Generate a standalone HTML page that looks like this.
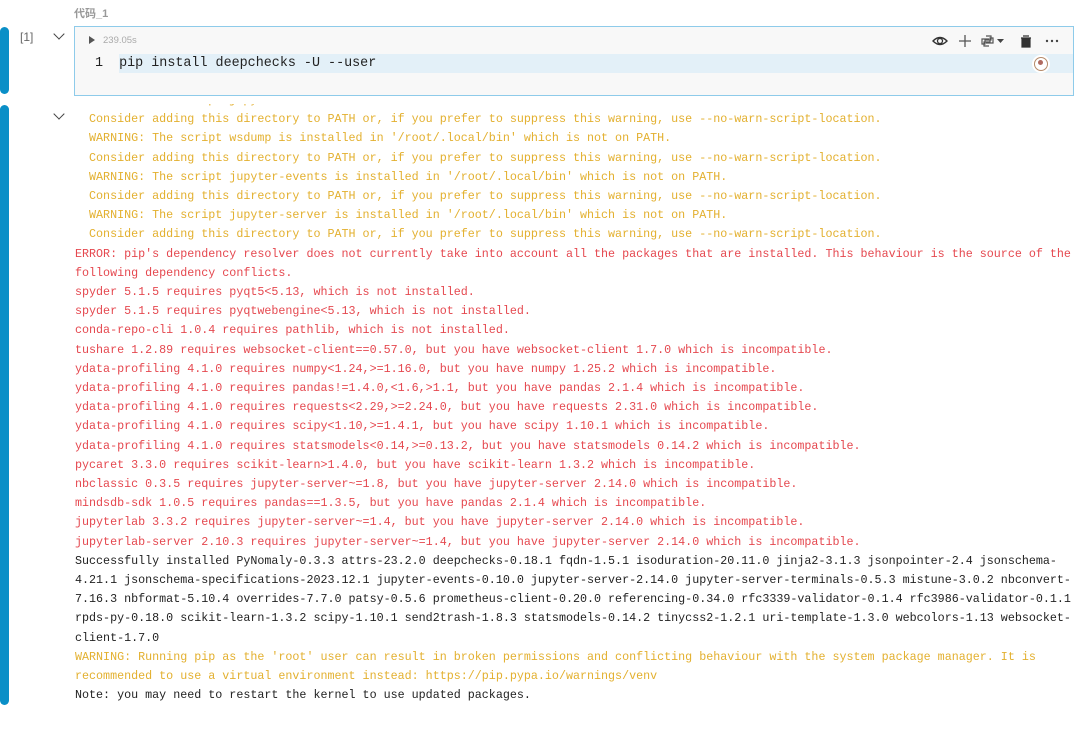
<!DOCTYPE html>
<html><head><meta charset="utf-8"><style>
body{margin:0;width:1080px;height:734px;background:#fff;position:relative;overflow:hidden;font-family:"Liberation Sans","Noto Sans CJK SC",sans-serif}
.abs{position:absolute}
.bar{position:absolute;left:0;width:9px;background:#0a8fc7;border-radius:5px}
pre{margin:0;font-family:"Liberation Mono",monospace;font-size:11.7px;line-height:19.2px;white-space:pre}
.y{color:#e3b02f}.r{color:#e5484f}.k{color:#222}
.chev{position:absolute;width:7px;height:7px;border-right:1.6px solid #444;border-bottom:1.6px solid #444;transform:rotate(45deg)}
</style></head><body>
<div class="abs" style="left:74px;top:5px;font-size:11px;color:#999;font-weight:bold">代码_1</div>
<div class="bar" style="top:27px;height:67px"></div>
<div class="bar" style="top:105px;height:600px"></div>
<div class="abs" style="left:20px;top:30px;font-size:12px;color:#666">[1]</div>
<div class="chev" style="left:55px;top:30px"></div>
<div class="chev" style="left:55px;top:110px"></div>
<div class="abs" style="left:74px;top:26px;width:998px;height:68px;border:1px solid #8ecbea;background:#f8f8f8">
 <div class="abs" style="left:14px;top:9px;width:0;height:0;border-left:6px solid #555;border-top:4.5px solid transparent;border-bottom:4.5px solid transparent"></div>
 <div class="abs" style="left:28px;top:8px;font-size:9.5px;color:#aaa">239.05s</div>
 <div class="abs" style="left:44px;top:27px;width:954px;height:19px;background:#e3f0f8"></div>
 <pre class="abs k" style="left:20px;top:28px;font-size:13.4px;line-height:18px">1  pip install deepchecks -U --user</pre>
 <div class="abs" style="left:957px;top:28px;width:18px;height:18px;border-radius:50%;background:#fff;"></div>
 <div class="abs" style="left:959px;top:30px;width:12px;height:12px;border-radius:50%;border:1.5px solid #b58a6a"></div>
 <div class="abs" style="left:963px;top:33px;width:5px;height:5px;border-radius:50%;background:#b06a60"></div>
 <svg class="abs" style="left:856px;top:6px" width="130" height="16" viewBox="0 0 130 16">
  <path d="M2 8 Q9 1 16 8 Q9 15 2 8Z" fill="none" stroke="#333" stroke-width="1.4"/><circle cx="9" cy="8" r="2.5" fill="none" stroke="#333" stroke-width="1.3"/>
  <path d="M34 2V14M28 8H40" stroke="#555" stroke-width="1.3"/>
  <path d="M55 3h5v4h-6v4h-3v-5h7M58 13h-5v-4h6v-4h3v5h-7" fill="none" stroke="#555" stroke-width="1.2"/>
  <path d="M66 6h7l-3.5 4z" fill="#444"/>
  <path d="M92 3h6M90 5h10M91 5v9h8v-9" fill="#333" stroke="#333" stroke-width="1.2"/>
  <circle cx="116" cy="8" r="1.2" fill="#444"/><circle cx="121" cy="8" r="1.2" fill="#444"/><circle cx="126" cy="8" r="1.2" fill="#444"/>
 </svg>
</div>
<div class="abs" style="left:75px;top:104px;width:1005px;height:600px;overflow:hidden">
<pre style="margin-top:-13px"><span class="y">  WARNING: The script jupyter-trust is installed in '/root/.local/bin' which is not on PATH.
  Consider adding this directory to PATH or, if you prefer to suppress this warning, use --no-warn-script-location.
  WARNING: The script wsdump is installed in '/root/.local/bin' which is not on PATH.
  Consider adding this directory to PATH or, if you prefer to suppress this warning, use --no-warn-script-location.
  WARNING: The script jupyter-events is installed in '/root/.local/bin' which is not on PATH.
  Consider adding this directory to PATH or, if you prefer to suppress this warning, use --no-warn-script-location.
  WARNING: The script jupyter-server is installed in '/root/.local/bin' which is not on PATH.
  Consider adding this directory to PATH or, if you prefer to suppress this warning, use --no-warn-script-location.</span>
<span class="r">ERROR: pip's dependency resolver does not currently take into account all the packages that are installed. This behaviour is the source of the
following dependency conflicts.
spyder 5.1.5 requires pyqt5&lt;5.13, which is not installed.
spyder 5.1.5 requires pyqtwebengine&lt;5.13, which is not installed.
conda-repo-cli 1.0.4 requires pathlib, which is not installed.
tushare 1.2.89 requires websocket-client==0.57.0, but you have websocket-client 1.7.0 which is incompatible.
ydata-profiling 4.1.0 requires numpy&lt;1.24,&gt;=1.16.0, but you have numpy 1.25.2 which is incompatible.
ydata-profiling 4.1.0 requires pandas!=1.4.0,&lt;1.6,&gt;1.1, but you have pandas 2.1.4 which is incompatible.
ydata-profiling 4.1.0 requires requests&lt;2.29,&gt;=2.24.0, but you have requests 2.31.0 which is incompatible.
ydata-profiling 4.1.0 requires scipy&lt;1.10,&gt;=1.4.1, but you have scipy 1.10.1 which is incompatible.
ydata-profiling 4.1.0 requires statsmodels&lt;0.14,&gt;=0.13.2, but you have statsmodels 0.14.2 which is incompatible.
pycaret 3.3.0 requires scikit-learn&gt;1.4.0, but you have scikit-learn 1.3.2 which is incompatible.
nbclassic 0.3.5 requires jupyter-server~=1.8, but you have jupyter-server 2.14.0 which is incompatible.
mindsdb-sdk 1.0.5 requires pandas==1.3.5, but you have pandas 2.1.4 which is incompatible.
jupyterlab 3.3.2 requires jupyter-server~=1.4, but you have jupyter-server 2.14.0 which is incompatible.
jupyterlab-server 2.10.3 requires jupyter-server~=1.4, but you have jupyter-server 2.14.0 which is incompatible.</span>
<span class="k">Successfully installed PyNomaly-0.3.3 attrs-23.2.0 deepchecks-0.18.1 fqdn-1.5.1 isoduration-20.11.0 jinja2-3.1.3 jsonpointer-2.4 jsonschema-
4.21.1 jsonschema-specifications-2023.12.1 jupyter-events-0.10.0 jupyter-server-2.14.0 jupyter-server-terminals-0.5.3 mistune-3.0.2 nbconvert-
7.16.3 nbformat-5.10.4 overrides-7.7.0 patsy-0.5.6 prometheus-client-0.20.0 referencing-0.34.0 rfc3339-validator-0.1.4 rfc3986-validator-0.1.1
rpds-py-0.18.0 scikit-learn-1.3.2 scipy-1.10.1 send2trash-1.8.3 statsmodels-0.14.2 tinycss2-1.2.1 uri-template-1.3.0 webcolors-1.13 websocket-
client-1.7.0</span>
<span class="y">WARNING: Running pip as the 'root' user can result in broken permissions and conflicting behaviour with the system package manager. It is
recommended to use a virtual environment instead: https://pip.pypa.io/warnings/venv</span>
<span class="k">Note: you may need to restart the kernel to use updated packages.</span></pre>
</div>
</body></html>
